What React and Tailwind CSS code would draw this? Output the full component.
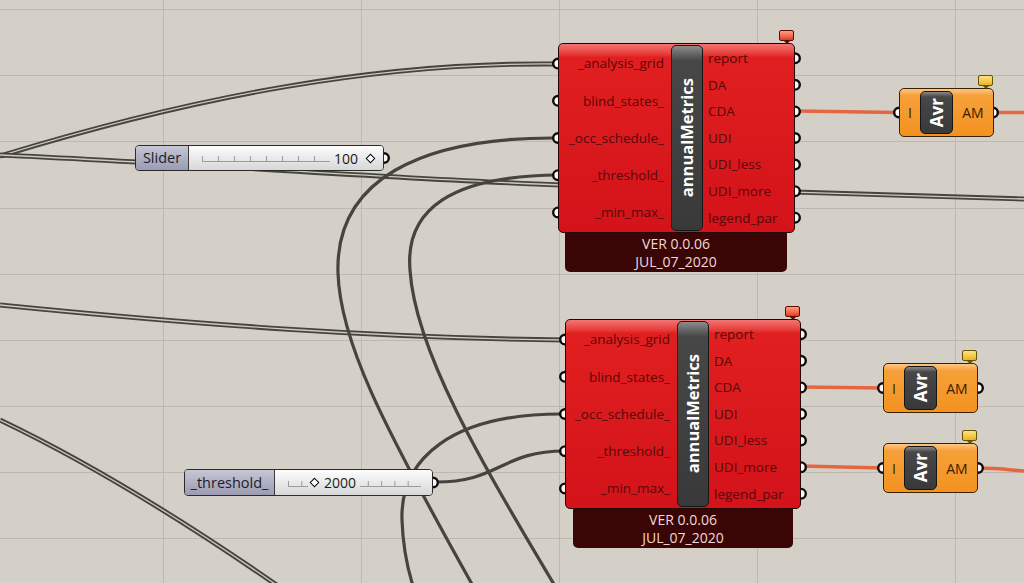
import React from "react";

const inputs = ["_analysis_grid", "blind_states_", "_occ_schedule_", "_threshold_", "_min_max_"];
const outputs = ["report", "DA", "CDA", "UDI", "UDI_less", "UDI_more", "legend_par"];

// node boxes, used to place the grips in the wire layer
const metricsBoxes = [
  { x: 558, y: 43, w: 237 },
  { x: 565, y: 319, w: 236 },
];

const grips = [
  ...metricsBoxes.flatMap(({ x, y, w }) => [
    ...inputs.map((_, i) => [x, y + 2 + (186 / 5) * (i + 0.5)]),
    ...outputs.map((_, i) => [x + w, y + 2 + (186 / 7) * (i + 0.5)]),
  ]),
  [899, 112.5],
  [993, 112.5],
  [883, 388],
  [978, 388],
  [883, 468],
  [978, 468],
  [384, 158],
  [433, 482.5],
];

const vLines = [163, 361, 559, 757, 955];
const hLines = [9, 75, 141, 208, 274, 340, 406, 472, 538];

const doubleWires = [
  "M0,156 C200,95 380,62 558,64",
  "M0,155 C180,163 420,180 560,185 S850,194 1024,199",
  "M0,305 C200,325 380,338 565,340",
  "M0,420 C90,463 190,525 278,586",
];

const singleWires = [
  "M558,138 C420,137 335,180 338,273 C340,340 380,420 473,586",
  "M558,175 C450,176 405,210 410,270 C415,350 480,460 555,586",
  "M433,482 C500,483 500,451 565,451",
  "M565,414 C450,413 400,460 402,520 C403,550 408,570 413,586",
];

const orangeWires = [
  "M795,111 L899,112.5",
  "M993,112.5 L1024,112.5",
  "M801,387 L883,388",
  "M801,466 L883,468",
  "M978,468 C1000,468 1010,470 1024,471",
];

function WireLayer() {
  return (
    <svg className="absolute inset-0 h-full w-full" viewBox="0 0 1024 583">
      {vLines.map((x) => (
        <line key={"v" + x} x1={x + 0.5} y1="0" x2={x + 0.5} y2="583" stroke="#bdb9b1" strokeWidth="1" />
      ))}
      {hLines.map((y) => (
        <line key={"h" + y} x1="0" y1={y + 0.5} x2="1024" y2={y + 0.5} stroke="#bdb9b1" strokeWidth="1" />
      ))}
      {doubleWires.map((d) => (
        <g key={d} fill="none">
          <path d={d} stroke="#46443f" strokeWidth="5" />
          <path d={d} stroke="#cdc9c1" strokeWidth="1.3" />
        </g>
      ))}
      {singleWires.map((d) => (
        <path key={d} d={d} fill="none" stroke="#46443f" strokeWidth="3.2" />
      ))}
      {orangeWires.map((d) => (
        <path key={d} d={d} fill="none" stroke="#e5673f" strokeWidth="3.5" />
      ))}
      {grips.map(([x, y], i) => (
        <circle key={i} cx={x} cy={y} r="4.8" fill="#fafafa" stroke="#0c0c0c" strokeWidth="2.4" />
      ))}
    </svg>
  );
}

function Flag({ yellow }) {
  return (
    <div className="absolute -top-[14px] right-0 flex flex-col items-center">
      <div
        className={
          yellow
            ? "h-[11px] w-[15px] rounded-[2px] border border-[#6a5000] bg-linear-to-b from-[#ffe27a] to-[#e8b616]"
            : "h-[11px] w-[15px] rounded-[2px] border border-[#5a0c00] bg-linear-to-b from-[#ff9c82] to-[#e6361c]"
        }
      />
      <div
        className={
          yellow
            ? "h-0 w-0 border-x-[3px] border-t-[3px] border-x-transparent border-t-[#6a5000]"
            : "h-0 w-0 border-x-[3px] border-t-[3px] border-x-transparent border-t-[#5a0c00]"
        }
      />
    </div>
  );
}

function MetricsNode({ pos, bodyW, inW, footer }) {
  return (
    <div className={`absolute flex flex-col ${pos}`}>
      <div
        className={`relative flex h-[190px] rounded-[5px] border border-[#250404] bg-linear-to-b from-[#f37373] via-[#e11f20] via-[7%] to-[#d3121a] ${bodyW}`}
      >
        <Flag />
        <div className={`flex flex-col py-[1px] pr-[7px] ${inW}`}>
          {inputs.map((t) => (
            <div key={t} className="flex flex-1 items-center justify-end text-[13.5px] text-[#560909]">
              {t}
            </div>
          ))}
        </div>
        <div className="my-[1px] flex w-[32px] items-center justify-center rounded-[5px] border border-[#151515] bg-linear-to-b from-[#8c8c8c] via-[#474747] via-[8%] to-[#393939]">
          <span className="rotate-180 text-[16.5px] font-bold text-white [writing-mode:vertical-rl]">
            annualMetrics
          </span>
        </div>
        <div className="flex flex-1 flex-col py-[1px] pl-[5px]">
          {outputs.map((t) => (
            <div key={t} className="flex flex-1 items-center text-[13.5px] text-[#560909]">
              {t}
            </div>
          ))}
        </div>
      </div>
      <div
        className={`flex h-[39px] flex-col items-center justify-center rounded-b-[5px] bg-[#3a0505] text-[14px] leading-[18px] text-[#f3d8d8] ${footer}`}
      >
        <span>VER 0.0.06</span>
        <span>JUL_07_2020</span>
      </div>
    </div>
  );
}

function AvrNode({ pos }) {
  return (
    <div
      className={`absolute flex w-[95px] rounded-[5px] border border-[#3a2200] bg-linear-to-b from-[#fcc680] via-[#f6a039] via-[14%] to-[#f3921e] ${pos}`}
    >
      <Flag yellow />
      <div className="flex w-[20px] items-center justify-center text-[14px] text-[#3a1a00]">I</div>
      <div className="my-[2px] flex w-[33px] items-center justify-center rounded-[5px] border border-[#151515] bg-linear-to-b from-[#8c8c8c] via-[#474747] via-[12%] to-[#393939]">
        <span className="rotate-180 text-[17px] font-bold leading-none text-white [writing-mode:vertical-rl]">
          Avr
        </span>
      </div>
      <div className="flex flex-1 items-center justify-center text-[14px] text-[#3a1a00]">AM</div>
    </div>
  );
}

function Track({ w, ticks, gap }) {
  const step = w / ticks;
  return (
    <svg className="absolute top-1/2 -translate-y-1/2" width={w} height="10" style={{ left: gap[0] }}>
      {Array.from({ length: ticks + 1 }, (_, i) => i * step)
        .filter((x) => !(gap[1] && x > gap[1] && x < gap[2]))
        .map((x) => (
          <line key={x} x1={x + 0.5} y1="3" x2={x + 0.5} y2="8" stroke="#9c9c9c" strokeWidth="1" />
        ))}
      {gap[1] ? (
        <>
          <line x1="0" y1="8.5" x2={gap[1]} y2="8.5" stroke="#9c9c9c" strokeWidth="1" />
          <line x1={gap[2]} y1="8.5" x2={w} y2="8.5" stroke="#9c9c9c" strokeWidth="1" />
        </>
      ) : (
        <line x1="0" y1="8.5" x2={w} y2="8.5" stroke="#9c9c9c" strokeWidth="1" />
      )}
    </svg>
  );
}

function Diamond() {
  return <div className="h-[7px] w-[7px] rotate-45 border-[1.5px] border-black bg-white" />;
}

export default function App() {
  return (
    <div className="relative h-[583px] w-[1024px] overflow-hidden bg-[#d4d0c8] font-['Open_Sans','Noto_Sans',sans-serif]">
      <WireLayer />

      <MetricsNode pos="left-[558px] top-[43px]" bodyW="w-[237px]" inW="w-[112px]" footer="ml-[7px] w-[222px]" />
      <MetricsNode pos="left-[565px] top-[319px]" bodyW="w-[236px]" inW="w-[111px]" footer="ml-[8px] w-[220px]" />

      <AvrNode pos="left-[899px] top-[88px] h-[49px]" />
      <AvrNode pos="left-[883px] top-[363px] h-[50px]" />
      <AvrNode pos="left-[883px] top-[443px] h-[50px]" />

      <div className="absolute left-[135px] top-[145px] flex h-[26px] w-[249px] overflow-hidden rounded-[4px] border border-[#2b2b2b]">
        <div className="flex w-[53px] items-center justify-center border-r border-[#3a3a3a] bg-linear-to-b from-[#c6c6d6] to-[#9b9bb2] text-[14.5px] text-[#1c1c28]">
          Slider
        </div>
        <div className="relative flex flex-1 items-center justify-end gap-[9px] bg-linear-to-b from-[#fdfdfd] to-[#d7d7d7] pr-[9px]">
          <Track w={128} ticks={8} gap={[13]} />
          <span className="text-[14px] text-[#1a1a1a]">100</span>
          <Diamond />
        </div>
      </div>

      <div className="absolute left-[184px] top-[469px] flex h-[27px] w-[249px] overflow-hidden rounded-[4px] border border-[#2b2b2b]">
        <div className="flex w-[90px] items-center justify-center border-r border-[#3a3a3a] bg-linear-to-b from-[#c6c6d6] to-[#9b9bb2] text-[14.5px] text-[#1c1c28]">
          _threshold_
        </div>
        <div className="relative flex flex-1 items-center gap-[6px] bg-linear-to-b from-[#fdfdfd] to-[#d7d7d7] pl-[36px]">
          <Track w={133} ticks={10} gap={[13, 20, 72]} />
          <Diamond />
          <span className="text-[14px] text-[#1a1a1a]">2000</span>
        </div>
      </div>
    </div>
  );
}
